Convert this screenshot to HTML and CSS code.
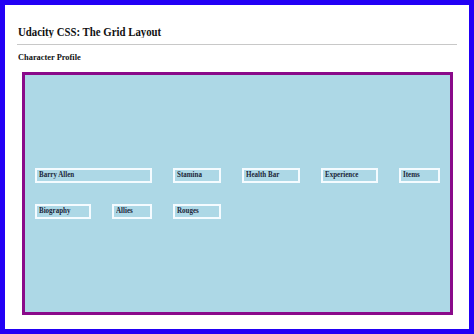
FILE: index.html
```html
<!DOCTYPE html>
<html>
<head>
<meta charset="utf-8">
<link rel="stylesheet" href="styles.css">
</head>
<body>
<div class="page">
  <h1 class="title">Udacity CSS: The Grid Layout</h1>
  <hr class="rule">
  <h2 class="subtitle">Character Profile</h2>
  <div class="profile">
    <div class="grid">
      <div class="cell name"><span class="label">Barry Allen</span></div>
      <div class="cell"><span class="label">Stamina</span></div>
      <div class="cell"><span class="label">Health Bar</span></div>
      <div class="cell"><span class="label">Experience</span></div>
      <div class="cell"><span class="label">Items</span></div>
      <div class="cell"><span class="label">Biography</span></div>
      <div class="cell"><span class="label">Allies</span></div>
      <div class="cell"><span class="label">Rouges</span></div>
    </div>
  </div>
</div>
</body>
</html>
```
FILE: styles.css
```css
html, body {
  margin: 0;
  padding: 0;
  background: #fff;
}
.page {
  box-sizing: border-box;
  width: 474px;
  height: 334px;
  border: 5px solid #2200f5;
  padding: 0 12px;
  font-family: "Liberation Serif", serif;
  color: #111;
  display: flex;
  flex-direction: column;
}
.title {
  margin: 0;
  padding: 19px 0 0 1px;
  font-size: 10.8px;
  font-weight: bold;
  line-height: 14px;
  transform: scaleY(1.16);
  transform-origin: left 80%;
}
.rule {
  margin: 6px 0 0;
  border: 0;
  border-top: 1px solid #c8c8c8;
  height: 0;
}
.subtitle {
  margin: 0;
  padding: 8px 0 0 1px;
  font-size: 8.4px;
  line-height: 10px;
  font-weight: bold;
  transform: scaleY(1.08);
  transform-origin: left 80%;
}
.profile {
  box-sizing: border-box;
  margin: 9px 4px 0 5px;
  height: 243px;
  border: 3px solid #8a0a8a;
  background: #add8e6;
  display: flex;
  align-items: center;
  padding: 0 10px;
}
.grid {
  display: grid;
  grid-template-columns: 56px 40px 48px 58px 57px 41px;
  column-gap: 21px;
  row-gap: 21px;
}
.cell {
  box-sizing: border-box;
  height: 15px;
  border: 2px solid #f4fbff;
  padding: 0 2px;
  font-size: 7px;
  line-height: 11px;
  font-weight: bold;
  color: #1b2638;
  white-space: nowrap;
}
.label {
  display: inline-block;
  transform: scaleY(1.12);
}
.name {
  grid-column: span 2;
}
```
